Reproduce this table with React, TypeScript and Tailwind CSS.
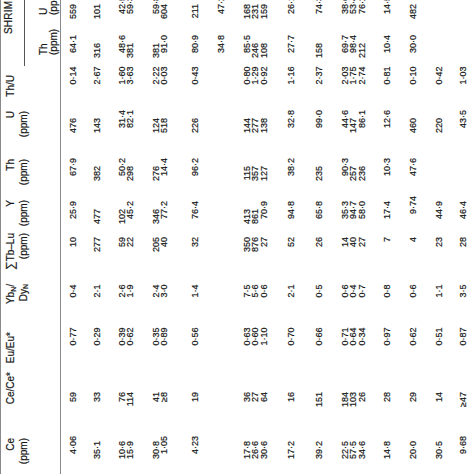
import React from "react";

type Col = { w: string; hw: string; iw: string };

const cols: Col[] = [
  { w: "w-[50px]", hw: "w-[37px]", iw: "w-[26px]" },
  { w: "w-[56px]", hw: "w-[53px]", iw: "w-[33px]" },
  { w: "w-[49px]", hw: "w-[37px]", iw: "w-[28.5px]" },
  { w: "w-[43px]", hw: "w-[36px]", iw: "w-[27.5px]" },
  { w: "w-[47px]", hw: "w-[44px]", iw: "w-[40px]" },
  { w: "w-[35px]", hw: "w-[30px]", iw: "w-[21px]" },
  { w: "w-[42px]", hw: "w-[36px]", iw: "w-[29px]" },
  { w: "w-[48px]", hw: "w-[42px]", iw: "w-[35px]" },
  { w: "w-[41px]", hw: "w-[30px]", iw: "w-[25.5px]" },
  { w: "w-[35px]", hw: "w-[30px]", iw: "w-[21px]" },
  { w: "w-[74px]", hw: "w-[38px]", iw: "w-[25px]" },
];

type Row = { mt: string; cells: string[][] };

const rows: Row[] = [
  { mt: "mt-[7.75px]", cells: [["4·06"], ["59"], ["0·77"], ["0·4"], ["10"], ["25·9"], ["67·9"], ["476"], ["0·14"], ["64·1"], ["559"]] },
  { mt: "mt-[15.5px]", cells: [["35·1"], ["33"], ["0·29"], ["2·1"], ["277"], ["477"], ["382"], ["143"], ["2·67"], ["316"], ["101"]] },
  { mt: "mt-[16.5px]", cells: [["10·6", "15·9"], ["76", "114"], ["0·39", "0·62"], ["2·6", "1·9"], ["59", "22"], ["102", "45·2"], ["50·2", "298"], ["31·4", "82·1"], ["1·60", "3·63"], ["48·6", "381"], ["42·5", "59·3"]] },
  { mt: "mt-[17px]", cells: [["30·8", "1·05"], ["41", "≥8"], ["0·35", "0·89"], ["2·4", "3·0"], ["205", "40"], ["346", "77·2"], ["276", "14·4"], ["124", "518"], ["2·22", "0·03"], ["381", "91·0"], ["59·8", "604"]] },
  { mt: "mt-[22px]", cells: [["4·23"], ["19"], ["0·56"], ["1·4"], ["32"], ["76·4"], ["96·2"], ["226"], ["0·43"], ["80·9"], ["211"]] },
  { mt: "mt-[17.5px]", cells: [[""], [""], [""], [""], [""], [""], [""], [""], [""], ["34·8"], ["47·2"]] },
  { mt: "mt-[17.5px]", cells: [["17·8", "26·6", "30·6"], ["36", "27", "64"], ["0·63", "0·60", "1·10"], ["7·5", "5·6", "0·6"], ["350", "876", "27"], ["413", "861", "70·9"], ["115", "357", "127"], ["144", "277", "138"], ["0·80", "1·29", "0·92"], ["85·5", "246", "108"], ["168", "231", "159"]] },
  { mt: "mt-[18.5px]", cells: [["17·2"], ["16"], ["0·70"], ["2·1"], ["52"], ["94·8"], ["38·2"], ["32·8"], ["1·16"], ["27·7"], ["26·1"]] },
  { mt: "mt-[19.5px]", cells: [["39·2"], ["151"], ["0·66"], ["0·5"], ["26"], ["65·8"], ["235"], ["99·0"], ["2·37"], ["158"], ["74·3"]] },
  { mt: "mt-[17.5px]", cells: [["22·5", "57·5", "34·6"], ["184", "103", "26"], ["0·71", "0·64", "0·34"], ["0·6", "0·4", "0·7"], ["14", "40", "27"], ["35·3", "94·7", "58·0"], ["90·3", "257", "236"], ["44·6", "147", "86·1"], ["2·03", "1·75", "2·74"], ["69·7", "98·4", "212"], ["38·6", "53·4", "76·2"]] },
  { mt: "mt-[16.5px]", cells: [["14·8"], ["28"], ["0·97"], ["0·8"], ["7"], ["17·4"], ["10·3"], ["12·6"], ["0·81"], ["10·4"], ["14·5"]] },
  { mt: "mt-[17.5px]", cells: [["20·0"], ["29"], ["0·62"], ["0·6"], ["4"], ["9·74"], ["47·6"], ["460"], ["0·10"], ["30·0"], ["482"]] },
  { mt: "mt-[17.5px]", cells: [["30·5"], ["14"], ["0·51"], ["1·1"], ["23"], ["44·9"], [""], ["220"], ["0·42"], [""], [""]] },
  { mt: "mt-[15.5px]", cells: [["9·68"], ["≥47"], ["0·87"], ["3·5"], ["28"], ["46·4"], [""], ["43·5"], ["1·03"], [""], [""]] },
];

function Num({ v, iw }: { v: string; iw: string }) {
  const i = v.indexOf("·");
  const int = i < 0 ? v : v.slice(0, i);
  const frac = i < 0 ? "" : v.slice(i);
  return (
    <div className="flex h-[8.5px] leading-[8.5px] whitespace-nowrap">
      <span className={`${iw} shrink-0 text-right`}>{int}</span>
      <span>{frac}</span>
    </div>
  );
}

const headers: React.ReactNode[][] = [
  ["Ce", "(ppm)"],
  ["Ce/Ce*"],
  ["Eu/Eu*"],
  [
    <span key="a">
      Yb<sub className="text-[7px]">N</sub>/
    </span>,
    <span key="b">
      Dy<sub className="text-[7px]">N</sub>
    </span>,
  ],
  [
    <span key="a">
      <span className="text-[12px] leading-[10px]">∑</span>Tb–Lu
    </span>,
    "(ppm)",
  ],
  ["Y", "(ppm)"],
  ["Th", "(ppm)"],
  ["U", "(ppm)"],
  ["Th/U"],
];

export default function App() {
  return (
    <div className="w-[474px] h-[474px] overflow-hidden bg-white">
      <div className="w-[474px] h-[474px] -rotate-90 bg-white">
        <div className="w-[520px] font-['Liberation_Sans',Arial,sans-serif] text-[9px] text-[#161616] [-webkit-text-stroke:0.2px_#161616]">
          <div className="h-px mt-px bg-[#8a8a8a]" />
          <div className="flex h-[59px] text-[10px]">
            {headers.map((h, ci) => (
              <div key={ci} className={`${cols[ci].w} shrink-0`}>
                <div className={`${cols[ci].hw} text-right pt-[4px] leading-[12.5px] whitespace-nowrap`}>
                  {h.map((line, li) => (
                    <div key={li}>{line}</div>
                  ))}
                </div>
              </div>
            ))}
            <div className="w-[109px] shrink-0 flex flex-col">
              <div className="pl-[30px] pt-[1.5px] leading-[12px] tracking-[0.2px]">SHRIMP</div>
              <div className="mt-[9.5px] -ml-[2px] h-px bg-[#555]" />
              <div className="flex pt-[14px] leading-[10px]">
                <div className="w-[35px] pl-[9px]">
                  <div>Th</div>
                  <div>(ppm)</div>
                </div>
                <div className="w-[74px] pl-[14px]">
                  <div>U</div>
                  <div>(ppm)</div>
                </div>
              </div>
            </div>
          </div>
          <div className="h-px bg-[#8a8a8a]" />
          <div className="flex flex-col">
            {rows.map((r, ri) => (
              <div key={ri} className={`${r.mt} flex`}>
                {r.cells.map((cell, ci) => (
                  <div key={ci} className={`${cols[ci].w} shrink-0 flex flex-col`}>
                    {cell.map((v, li) => (
                      <Num key={li} v={v} iw={cols[ci].iw} />
                    ))}
                  </div>
                ))}
              </div>
            ))}
          </div>
        </div>
      </div>
    </div>
  );
}
